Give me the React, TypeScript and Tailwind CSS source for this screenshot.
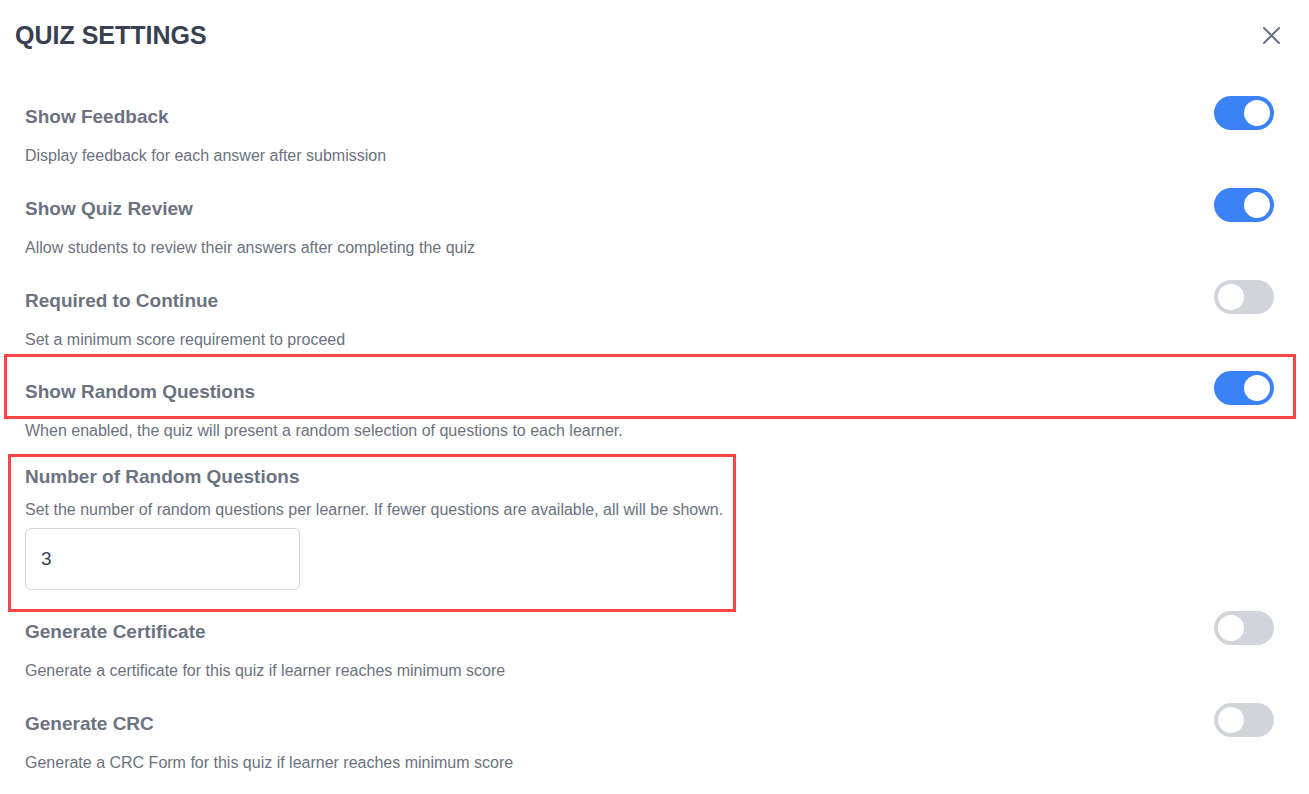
import React, { useState } from 'react';

type Setting = {
  key: string;
  label: string;
  description: string;
  enabled: boolean;
};

const initialSettings: Setting[] = [
  {
    key: 'feedback',
    label: 'Show Feedback',
    description: 'Display feedback for each answer after submission',
    enabled: true,
  },
  {
    key: 'review',
    label: 'Show Quiz Review',
    description: 'Allow students to review their answers after completing the quiz',
    enabled: true,
  },
  {
    key: 'required',
    label: 'Required to Continue',
    description: 'Set a minimum score requirement to proceed',
    enabled: false,
  },
  {
    key: 'random',
    label: 'Show Random Questions',
    description:
      'When enabled, the quiz will present a random selection of questions to each learner.',
    enabled: true,
  },
  {
    key: 'certificate',
    label: 'Generate Certificate',
    description: 'Generate a certificate for this quiz if learner reaches minimum score',
    enabled: false,
  },
  {
    key: 'crc',
    label: 'Generate CRC',
    description: 'Generate a CRC Form for this quiz if learner reaches minimum score',
    enabled: false,
  },
];

function Toggle({ on, onClick }: { on: boolean; onClick: () => void }) {
  return (
    <button
      type="button"
      onClick={onClick}
      className={`flex h-[34px] w-[60px] shrink-0 items-center rounded-full px-[4px] ${
        on ? 'justify-end bg-[#3b82f6]' : 'justify-start bg-[#d1d5db]'
      }`}
    >
      <span className="block h-[26px] w-[26px] rounded-full bg-white" />
    </button>
  );
}

function SettingHeader({
  setting,
  onToggle,
}: {
  setting: Setting;
  onToggle: () => void;
}) {
  return (
    <div className="flex h-[34px] items-center justify-between">
      <span className="mt-[8px] text-[19px] leading-6 font-bold text-[#6b7280]">
        {setting.label}
      </span>
      <Toggle on={setting.enabled} onClick={onToggle} />
    </div>
  );
}

export default function App() {
  const [settings, setSettings] = useState(initialSettings);
  const [count, setCount] = useState('3');

  const toggle = (key: string) =>
    setSettings((s) =>
      s.map((x) => (x.key === key ? { ...x, enabled: !x.enabled } : x))
    );

  const byKey = (key: string) => settings.find((s) => s.key === key)!;

  const plainRow = (key: string, extra = '') => {
    const s = byKey(key);
    return (
      <div key={key} className={extra}>
        <SettingHeader setting={s} onToggle={() => toggle(key)} />
        <p className="mt-[14px] text-[16px] leading-6 text-[#6b7280]">
          {s.description}
        </p>
      </div>
    );
  };

  const random = byKey('random');

  return (
    <div
      className="min-h-[794px] w-[1309px] bg-white"
      style={{ fontFamily: '"Liberation Sans", Arial, sans-serif' }}
    >
      <div className="flex h-[70px] items-center justify-between pr-[29px] pl-[15px]">
        <h1 className="text-[25px] leading-8 font-bold text-[#374151]">
          QUIZ SETTINGS
        </h1>
        <button type="button" className="text-[#6b7280]">
          <svg width="17" height="17" viewBox="0 0 17 17" fill="none">
            <path
              d="M1 1L16 16M16 1L1 16"
              stroke="currentColor"
              strokeWidth="2"
              strokeLinecap="round"
            />
          </svg>
        </button>
      </div>

      <div className="pt-[26px] pr-[35px] pl-[25px]">
        {plainRow('feedback')}
        {plainRow('review', 'mt-[20px]')}
        {plainRow('required', 'mt-[20px]')}

        <div className="mt-[20px]">
          <div className="-mt-[18px] -mr-[22px] -mb-[14px] -ml-[21px] border-[3px] border-[#ff4444] pt-[14px] pr-[19px] pb-[11px] pl-[18px]">
            <SettingHeader setting={random} onToggle={() => toggle('random')} />
          </div>
          <p className="mt-[14px] text-[16px] leading-6 text-[#6b7280]">
            {random.description}
          </p>
        </div>

        {random.enabled && (
          <div className="mt-[11px] -ml-[17px] w-[728px] border-[3px] border-[#ff4444] pt-[8px] pb-[19px] pl-[14px]">
            <div className="text-[19px] leading-6 font-bold text-[#6b7280]">
              Number of Random Questions
            </div>
            <p className="mt-[9px] text-[16px] leading-6 text-[#6b7280]">
              Set the number of random questions per learner. If fewer questions
              are available, all will be shown.
            </p>
            <input
              type="number"
              value={count}
              onChange={(e) => setCount(e.target.value)}
              className="mt-[6px] h-[62px] w-[275px] rounded-md border border-[#d1d5db] px-[15px] text-[19px] text-[#374151] outline-none"
            />
          </div>
        )}

        {plainRow('certificate', '-mt-[1px]')}
        {plainRow('crc', 'mt-[20px]')}
      </div>
    </div>
  );
}
